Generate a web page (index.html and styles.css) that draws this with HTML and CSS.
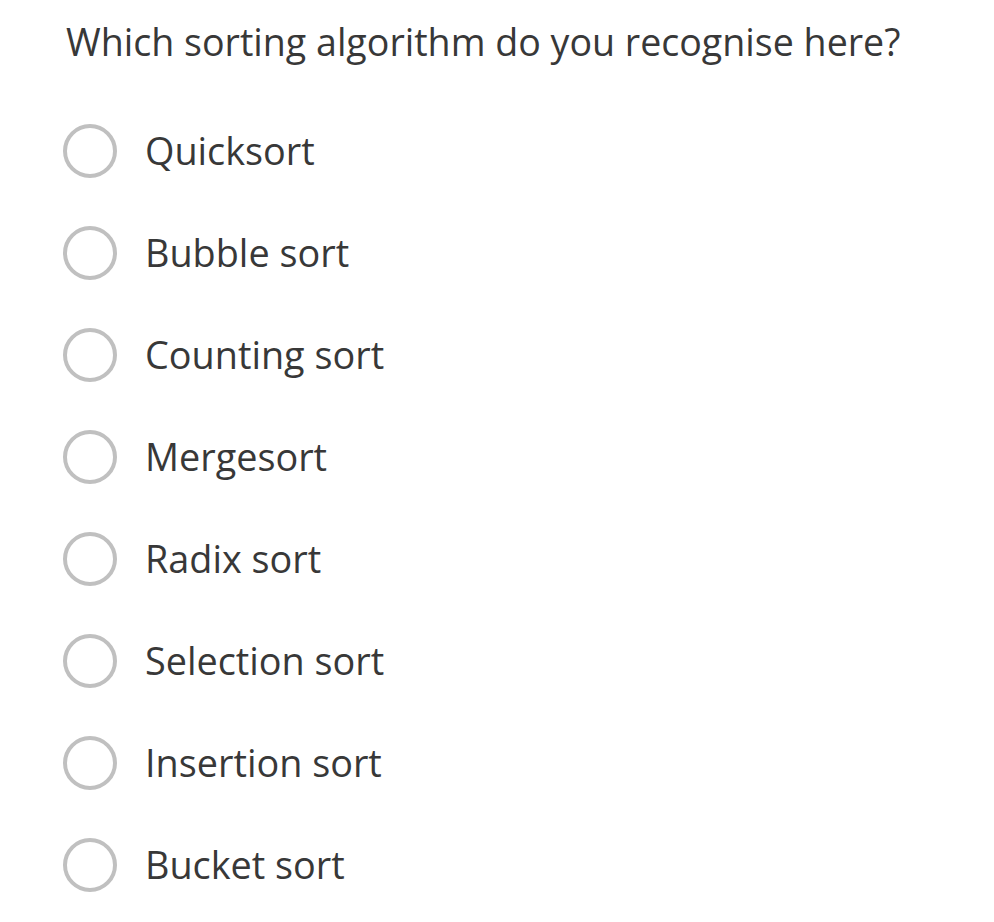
FILE: index.html
```html
<!DOCTYPE html>
<html lang="en">
<head>
<meta charset="utf-8">
<title>Quiz</title>
<link rel="stylesheet" href="styles.css">
</head>
<body>
<div class="quiz">
  <h1 class="question">Which sorting algorithm do you recognise here?</h1>
  <ul class="options">
    <li class="option"><span class="radio"></span><span class="label">Quicksort</span></li>
    <li class="option"><span class="radio"></span><span class="label">Bubble sort</span></li>
    <li class="option"><span class="radio"></span><span class="label">Counting sort</span></li>
    <li class="option"><span class="radio"></span><span class="label">Mergesort</span></li>
    <li class="option"><span class="radio"></span><span class="label">Radix sort</span></li>
    <li class="option"><span class="radio"></span><span class="label">Selection sort</span></li>
    <li class="option"><span class="radio"></span><span class="label">Insertion sort</span></li>
    <li class="option"><span class="radio"></span><span class="label">Bucket sort</span></li>
  </ul>
</div>
</body>
</html>
```
FILE: styles.css
```css
html, body {
  margin: 0;
  padding: 0;
  background: #ffffff;
}
body {
  font-family: "Open Sans", "Liberation Sans", sans-serif;
  color: #383838;
}
.quiz {
  padding: 16px 0 0 63px;
}
.question {
  margin: 0 0 0 3px;
  font-size: 37.6px;
  font-weight: 400;
  line-height: 52px;
}
.options {
  list-style: none;
  margin: 0;
  padding: 55px 0 0 0;
  display: flex;
  flex-direction: column;
  gap: 47px;
}
.option {
  display: flex;
  align-items: center;
  gap: 28px;
  height: 55px;
}
.radio {
  box-sizing: border-box;
  width: 54px;
  height: 54px;
  border: 4px solid #c0c0c0;
  border-radius: 50%;
  flex: none;
}
.label {
  font-size: 37.8px;
  line-height: 52px;
}
```
